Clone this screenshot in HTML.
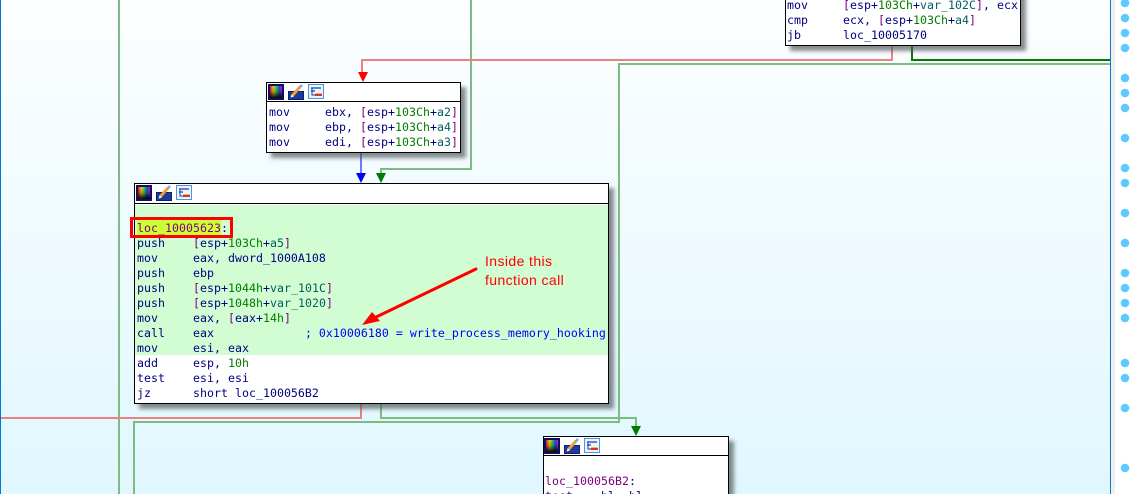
<!DOCTYPE html>
<html>
<head>
<meta charset="utf-8">
<style>
html,body{margin:0;padding:0;width:1133px;height:494px;overflow:hidden;background:#fff}
#g{position:absolute;left:0;top:0;width:1110px;height:494px;background:linear-gradient(#fdfeff 0,#e0f7ff 100%);overflow:hidden}
#l{position:absolute;left:0;top:0}
.b{position:absolute;box-sizing:border-box;background:#fff;border:1px solid #000;box-shadow:5px 5px 4px rgba(70,80,85,.65)}
.t{position:absolute;white-space:pre;font:11.6px/15px "DejaVu Sans Mono",monospace;letter-spacing:.017px;color:#000080}
.t i{font-style:normal;color:#007c00}
.t u{text-decoration:none;color:#800080}
.t s{text-decoration:none;color:#005f60}
.t b{font-weight:normal;color:#0000ff}
.h{position:absolute;height:1px;background:#000}
.a{position:absolute;font:14px/19px "Liberation Sans",sans-serif;letter-spacing:.4px;color:#f00;white-space:pre}
</style>
</head>
<body>
<div id="g">
<svg id="l" width="1110" height="494" fill="none" stroke-width="2">
<g stroke="#7dbd82">
<path d="M119 0V494"/>
<path d="M471 0V169H381V174"/>
<path d="M134 494V422H619V64H1110"/>
<path d="M381 404V418H636V426"/>
</g>
<g stroke="#f08080">
<path d="M892 45V60H362V72"/>
<path d="M1 418H361V404"/>
</g>
<path d="M361 152V174" stroke="#6f78ff"/>
<path d="M912 45V60H1110" stroke="#007c00"/>
<path d="M358 72H368L363 82Z" fill="#f00" stroke="none"/>
<path d="M356 173H366L361 183Z" fill="#00f" stroke="none"/>
<path d="M376 173H386L381 183Z" fill="#007c00" stroke="none"/>
<path d="M631 426H641L636 436Z" fill="#007c00" stroke="none"/>
</svg>

<div class="b" style="left:785px;top:-20px;width:236px;height:66px"></div>
<div class="t" style="left:787px;top:-2px">mov     <u>[</u>esp+<i>103Ch</i>+<s>var_102C</s><u>]</u>, ecx</div>
<div class="t" style="left:787px;top:13px">cmp     ecx, <u>[</u>esp+<i>103Ch</i>+<s>a4</s><u>]</u></div>
<div class="t" style="left:787px;top:28px">jb      loc_10005170</div>

<div class="b" style="left:266px;top:82px;width:195px;height:71px"></div>
<div class="h" style="left:267px;top:101px;width:193px"></div>
<div class="t" style="left:269px;top:105px">mov     ebx, <u>[</u>esp+<i>103Ch</i>+<s>a2</s><u>]</u></div>
<div class="t" style="left:269px;top:120px">mov     ebp, <u>[</u>esp+<i>103Ch</i>+<s>a4</s><u>]</u></div>
<div class="t" style="left:269px;top:135px">mov     edi, <u>[</u>esp+<i>103Ch</i>+<s>a3</s><u>]</u></div>

<div class="b" style="left:134px;top:183px;width:475px;height:221px"></div>
<div class="h" style="left:135px;top:203px;width:473px"></div>
<div style="position:absolute;left:135px;top:205px;width:473px;height:150px;background:#d2fdd2"></div>
<div style="position:absolute;left:137px;top:220px;width:84px;height:15px;background:#ccff33"></div>
<div class="t" style="left:137px;top:221px"><u>loc_10005623</u>:</div>
<div class="t" style="left:137px;top:236px">push    <u>[</u>esp+<i>103Ch</i>+<s>a5</s><u>]</u></div>
<div class="t" style="left:137px;top:251px">mov     eax, dword_1000A108</div>
<div class="t" style="left:137px;top:266px">push    ebp</div>
<div class="t" style="left:137px;top:281px">push    <u>[</u>esp+<i>1044h</i>+<s>var_101C</s><u>]</u></div>
<div class="t" style="left:137px;top:296px">push    <u>[</u>esp+<i>1048h</i>+<s>var_1020</s><u>]</u></div>
<div class="t" style="left:137px;top:311px">mov     eax, <u>[</u>eax+<i>14h</i><u>]</u></div>
<svg style="position:absolute;left:340px;top:260px" width="145" height="70" fill="none">
<path d="M136 9L32 59" stroke="#f00" stroke-width="3" stroke-linecap="round"/>
<path d="M22 65L32 52L40 61Z" fill="#f00"/>
</svg>
<div class="t" style="left:137px;top:326px">call    eax             <b>; 0x10006180 = write_process_memory_hooking</b></div>
<div class="t" style="left:137px;top:341px">mov     esi, eax</div>
<div class="t" style="left:137px;top:356px">add     esp, <i>10h</i></div>
<div class="t" style="left:137px;top:371px">test    esi, esi</div>
<div class="t" style="left:137px;top:386px">jz      short loc_100056B2</div>
<div style="position:absolute;left:130px;top:217px;width:97px;height:15px;border:3px solid #f00"></div>
<div class="a" style="left:485px;top:252px">Inside this</div>
<div class="a" style="left:485px;top:271px">function call</div>

<div class="b" style="left:543px;top:436px;width:186px;height:80px"></div>
<div class="h" style="left:544px;top:455px;width:184px"></div>
<div class="t" style="left:545px;top:474px"><u>loc_100056B2</u>:</div>
<div class="t" style="left:545px;top:489px">test    bl, bl</div>

<svg style="position:absolute;left:0;top:0" width="1110" height="494">
<defs>
<linearGradient id="r" x1="0" x2="1" y1="0" y2="0">
<stop offset="0" stop-color="#f01030"/><stop offset=".3" stop-color="#f0d020"/><stop offset=".55" stop-color="#20d040"/><stop offset=".8" stop-color="#2040f0"/><stop offset="1" stop-color="#e020d0"/>
</linearGradient>
<linearGradient id="d" x1="0" x2="0" y1="0" y2="1">
<stop offset="0" stop-color="#000" stop-opacity="0"/><stop offset=".45" stop-color="#000" stop-opacity=".2"/><stop offset="1" stop-color="#000" stop-opacity=".95"/>
</linearGradient>
<g id="ic">
<rect x=".5" y=".5" width="15" height="15" fill="#101060" stroke="#101060"/>
<rect x="2" y="2" width="12" height="12" fill="url(#r)"/>
<rect x="2" y="2" width="12" height="12" fill="url(#d)"/>
<rect x="20.500" y="7.500" width="15" height="8" fill="#1c3c9c" stroke="#102070"/>
<path d="M24 12L32 3" stroke="#f0a030" stroke-width="3"/>
<path d="M31.500 3.500L34 1" stroke="#70b0e0" stroke-width="2.500"/>
<path d="M22.500 13.500L23.800 10.500L25.800 12.500Z" fill="#fff"/>
<rect x="40.500" y=".5" width="15" height="14" fill="#eaf4ff" stroke="#4a94e0"/>
<path d="M43 4H53M43 7H47" stroke="#1a3fa0" stroke-width="1.200"/>
<path d="M44 4V11H47" stroke="#1a3fa0" fill="none"/>
<rect x="47" y="9" width="7" height="3" fill="#d83030"/>
<rect x="47" y="9" width="7" height="1" fill="#e8c040"/>
</g>
</defs>
<use href="#ic" x="268" y="84"/>
<use href="#ic" x="136" y="185"/>
<use href="#ic" x="544" y="438"/>
</svg>
</div>
<div style="position:absolute;left:0;top:0;width:1px;height:494px;background:#0078d7"></div>
<div style="position:absolute;left:1110px;top:0;width:1px;height:494px;background:#0b78d0"></div>
<div style="position:absolute;left:1111px;top:0;width:4px;height:494px;background:#f0f0f0"></div>
<svg style="position:absolute;left:1115px;top:0" width="18" height="494" fill="#5ec9ff">
<circle cx="10" cy="3" r="4.300"/><circle cx="10" cy="18" r="4.300"/><circle cx="10" cy="33" r="4.300"/><circle cx="10" cy="48" r="4.300"/><circle cx="10" cy="78" r="4.300"/><circle cx="10" cy="93" r="4.300"/><circle cx="10" cy="108" r="4.300"/><circle cx="10" cy="138" r="4.300"/><circle cx="10" cy="168" r="4.300"/><circle cx="10" cy="183" r="4.300"/><circle cx="10" cy="213" r="4.300"/><circle cx="10" cy="243" r="4.300"/><circle cx="10" cy="273" r="4.300"/><circle cx="10" cy="288" r="4.300"/><circle cx="10" cy="303" r="4.300"/><circle cx="10" cy="318" r="4.300"/><circle cx="10" cy="363" r="4.300"/><circle cx="10" cy="378" r="4.300"/><circle cx="10" cy="408" r="4.300"/><circle cx="10" cy="468" r="4.300"/>
</svg>
</body>
</html>
